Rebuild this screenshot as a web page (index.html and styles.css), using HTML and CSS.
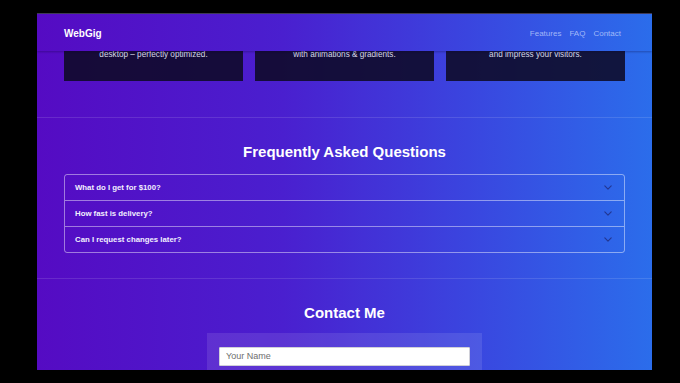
FILE: index.html
```html
<!DOCTYPE html>
<html lang="en">
<head>
    <meta charset="UTF-8">
    <meta name="viewport" content="width=device-width, initial-scale=1.0">
    <title>WebGig</title>
    <link rel="stylesheet" href="styles.css">
</head>
<body>
    <div class="screen">
        <header class="topbar">
            <div class="brand">WebGig</div>
            <nav class="nav">
                <a href="#features">Features</a>
                <a href="#faq">FAQ</a>
                <a href="#contact">Contact</a>
            </nav>
        </header>

        <div class="scroll">
            <section class="features" id="features">
                <div class="card"><p>desktop – perfectly optimized.</p></div>
                <div class="card"><p>with animations &amp; gradients.</p></div>
                <div class="card"><p>and impress your visitors.</p></div>
            </section>

            <section class="block" id="faq">
                <h2>Frequently Asked Questions</h2>
                <div class="faq">
                    <div class="faq-item">
                        <span>What do I get for $100?</span>
                        <svg class="chevron" viewBox="0 0 10 6" fill="none" stroke="currentColor" stroke-width="1.4" stroke-linecap="round" stroke-linejoin="round"><polyline points="1 1 5 5 9 1"></polyline></svg>
                    </div>
                    <div class="faq-item">
                        <span>How fast is delivery?</span>
                        <svg class="chevron" viewBox="0 0 10 6" fill="none" stroke="currentColor" stroke-width="1.4" stroke-linecap="round" stroke-linejoin="round"><polyline points="1 1 5 5 9 1"></polyline></svg>
                    </div>
                    <div class="faq-item">
                        <span>Can I request changes later?</span>
                        <svg class="chevron" viewBox="0 0 10 6" fill="none" stroke="currentColor" stroke-width="1.4" stroke-linecap="round" stroke-linejoin="round"><polyline points="1 1 5 5 9 1"></polyline></svg>
                    </div>
                </div>
            </section>

            <section class="block" id="contact">
                <h2>Contact Me</h2>
                <form class="contact-form">
                    <input type="text" placeholder="Your Name">
                </form>
            </section>
        </div>
    </div>
</body>
</html>
```

FILE: styles.css
```css
/* Frame */
body {
    margin: 0;
    padding: 0;
    background: #000000;
    font-family: 'Liberation Sans', Arial, sans-serif;
    color: #ffffff;
}

.screen {
    margin: 13px 0 0 37px;
    width: 615px;
    height: 357px;
    box-sizing: border-box;
    border-top: 1px solid #3e3a56;
    overflow: hidden;
    display: flex;
    flex-direction: column;
    background: linear-gradient(90deg, #550bc3 0%, #4a1fcf 40%, #3a45df 70%, #2b6deb 100%);
}

/* Header */
.topbar {
    height: 37px;
    flex-shrink: 0;
    display: flex;
    align-items: center;
    justify-content: space-between;
    padding: 2px 31px 0 27px;
    box-sizing: border-box;
    background: inherit;
    box-shadow: 0 1px 2px rgba(10, 0, 40, 0.3);
    position: relative;
    z-index: 2;
}

.brand {
    font-size: 10px;
    font-weight: 700;
}

.nav {
    display: flex;
    gap: 8px;
}

.nav a {
    font-size: 8px;
    color: rgba(200, 215, 255, 0.75);
    text-decoration: none;
}

/* Scrolled content */
.scroll {
    flex: 1;
    overflow: hidden;
}

.features {
    padding: 0 27px 36px;
    display: grid;
    grid-template-columns: repeat(3, 1fr);
    gap: 12px;
}

.card {
    background: rgba(14, 10, 38, 0.88);
    padding: 0 0 22px;
    text-align: center;
}

.card p {
    margin: 0;
    font-size: 8.2px;
    line-height: 8px;
    color: #d8d8e8;
}

.block {
    border-top: 1px solid rgba(255, 255, 255, 0.12);
    padding: 24px 27px 25px;
}

h2 {
    margin: 0 0 12px;
    font-size: 15px;
    line-height: 20px;
    font-weight: 700;
    text-align: center;
}

/* FAQ */
.faq {
    border: 1px solid rgba(255, 255, 255, 0.45);
    border-radius: 3px;
}

.faq-item {
    height: 25px;
    display: flex;
    align-items: center;
    justify-content: space-between;
    padding: 0 12px 0 10px;
    font-size: 7.8px;
    font-weight: 700;
    color: #f2f0ff;
}

.faq-item + .faq-item {
    border-top: 1px solid rgba(255, 255, 255, 0.45);
}

.chevron {
    width: 8px;
    height: 5px;
    color: rgba(30, 35, 110, 0.7);
}

/* Contact */
#contact h2 {
    margin-bottom: 10px;
}

.contact-form {
    width: 275px;
    margin: 0 auto;
    padding: 12px;
    box-sizing: border-box;
    background: rgba(255, 255, 255, 0.1);
    height: 60px;
}

.contact-form input {
    width: 100%;
    height: 19px;
    box-sizing: border-box;
    border: 1px solid #d0d0d8;
    border-radius: 1px;
    padding: 0 6px;
    font-family: inherit;
    font-size: 9px;
    background: #ffffff;
}

.contact-form input::placeholder {
    color: #6e6e6e;
}
```
